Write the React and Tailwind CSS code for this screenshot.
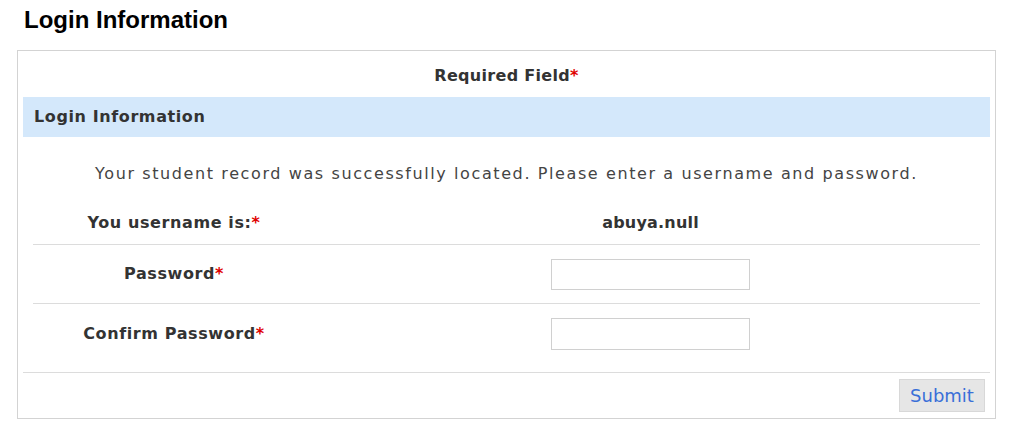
export default function App() {
  const font = { fontFamily: '"DejaVu Sans", Verdana, sans-serif' };
  return (
    <div className="bg-white min-h-screen w-[1024px] h-[443px] pt-[5px]">
      <h1 className="ml-[24px] text-[24px] leading-[30px] font-bold text-black font-['Liberation_Sans',Arial,sans-serif]">
        Login Information
      </h1>
      <div className="ml-[17px] mt-[15px] w-[979px] border border-[#d3d3d3]" style={font}>
        <div className="h-[46px] pt-[15px] text-center text-[16px] leading-[20px] tracking-[0.3px] font-bold text-[#333]">
          Required Field<span className="text-[#e00000]">*</span>
        </div>
        <div className="mx-[5px] h-[40px] flex items-center pl-[11px] bg-[#d4e8fb] text-[16px] tracking-[0.6px] font-bold text-[#333]">
          Login Information
        </div>
        <div className="h-[73px] pt-[1px] flex items-center justify-center text-[16px] tracking-[1.6px] text-[#444]">
          Your student record was successfully located. Please enter a username and password.
        </div>
        <div className="mx-[15px] text-[16px] tracking-[0.6px] font-bold text-[#333]">
          <div className="h-[35px] flex border-b border-[#dcdcdc] pt-[3px]">
            <div className="w-[282px] text-center leading-[20px]">
              You username is:<span className="text-[#e00000]">*</span>
            </div>
            <div className="flex-1 pl-[6px] text-center leading-[20px] tracking-[0.2px]">abuya.null</div>
          </div>
          <div className="h-[59px] flex items-center border-b border-[#dcdcdc]">
            <div className="w-[282px] text-center">
              Password<span className="text-[#e00000]">*</span>
            </div>
            <div className="flex-1 pl-[6px] flex justify-center">
              <input type="password" className="w-[199px] h-[31px] border border-[#d0d0d0] outline-none" />
            </div>
          </div>
          <div className="h-[60px] mb-[8px] flex items-center">
            <div className="w-[282px] text-center">
              Confirm Password<span className="text-[#e00000]">*</span>
            </div>
            <div className="flex-1 pl-[6px] flex justify-center">
              <input type="password" className="w-[199px] h-[32px] border border-[#d0d0d0] outline-none" />
            </div>
          </div>
        </div>
        <div className="mx-[5px] border-t border-[#dcdcdc] flex justify-end pt-[6px] pb-[6px] pr-[5px]">
          <button className="h-[33px] w-[86px] bg-[#e6e6e6] border border-[#d8d8d8] text-[18px] text-[#3a6fd8]">
            Submit
          </button>
        </div>
      </div>
    </div>
  );
}
